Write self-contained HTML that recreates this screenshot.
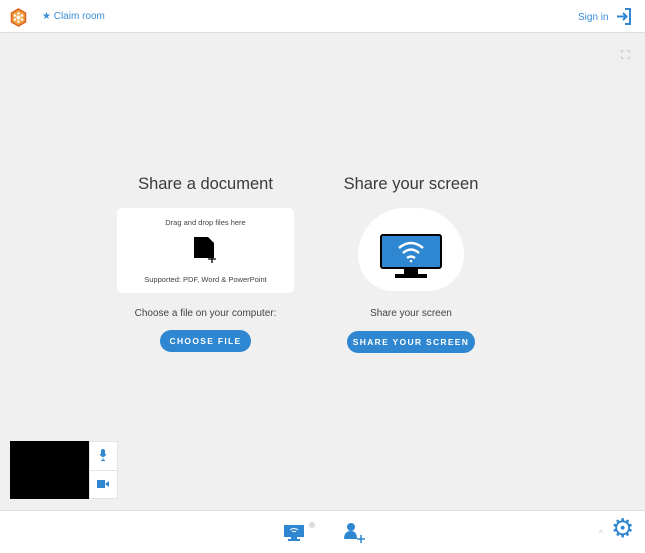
<!DOCTYPE html>
<html><head><meta charset="utf-8"><style>
*{margin:0;padding:0;box-sizing:border-box}
body{width:645px;height:553px;background:#f0f0f0;font-family:"Liberation Sans",sans-serif;position:relative;overflow:hidden}
.top{position:absolute;left:0;top:0;width:645px;height:33px;background:#fff;border-bottom:1px solid #ddd}
.bot{position:absolute;left:0;top:510px;width:645px;height:43px;background:#fff;border-top:1px solid #ddd}
.blue{color:#3a8dd6}
.abs{position:absolute}
h2{position:absolute;font-weight:normal;font-size:16.5px;color:#3a3a3a;text-align:center}
.btn{position:absolute;background:#2e87d0;color:#fff;font-size:8.5px;letter-spacing:1.3px;font-weight:bold;text-align:center;border-radius:11px;height:22px;line-height:22px}
</style></head><body>
<div class="top">
 <svg class="abs" style="left:10px;top:8px" width="17" height="19" viewBox="0 0 17 19"><path d="M8.5 1 L15.5 5 L15.5 14 L8.5 18 L1.5 14 L1.5 5Z" fill="#f0a040" stroke="#e06020" stroke-width="1.5"/><circle cx="8.5" cy="9.5" r="2" fill="#fff"/><circle cx="8.5" cy="5.5" r="1.3" fill="#fff"/><circle cx="8.5" cy="13.5" r="1.3" fill="#fff"/><circle cx="5" cy="7.5" r="1.3" fill="#fff"/><circle cx="12" cy="7.5" r="1.3" fill="#fff"/><circle cx="5" cy="11.5" r="1.3" fill="#fff"/><circle cx="12" cy="11.5" r="1.3" fill="#fff"/></svg>
 <div class="abs blue" style="left:42px;top:11px;font-size:10px">★ Claim room</div>
 <div class="abs blue" style="left:578px;top:12px;font-size:10px">Sign in</div>
 <svg class="abs" style="left:616px;top:8px" width="16" height="17" viewBox="0 0 16 17"><path d="M9 1H14V16H9" fill="none" stroke="#2e87d0" stroke-width="2"/><path d="M1 8.5H10M7 5L10.5 8.5L7 12" fill="none" stroke="#2e87d0" stroke-width="2"/></svg>
</div>
<div class="abs" style="left:621px;top:50px;width:9px;height:9px;border:1px dashed #ccc"></div>
<h2 style="left:117px;width:177px;top:175px">Share a document</h2>
<h2 style="left:330px;width:162px;top:175px">Share your screen</h2>
<div class="abs" style="left:117px;top:208px;width:177px;height:85px;background:#fff;border-radius:5px">
 <div class="abs" style="top:10px;width:100%;text-align:center;font-size:7.5px;color:#444">Drag and drop files here</div>
 <svg class="abs" style="left:77px;top:29px" width="24" height="27" viewBox="0 0 24 27"><path d="M0 0H14L20 6V21H0Z" fill="#000"/><path d="M18 18V26M14 22H22" stroke="#000" stroke-width="1.3" fill="none"/></svg>
 <div class="abs" style="top:67px;width:100%;text-align:center;font-size:7.5px;color:#444">Supported: PDF, Word &amp; PowerPoint</div>
</div>
<div class="abs" style="left:358px;top:208px;width:106px;height:83px;background:#fff;border-radius:53px 53px 40px 40px"></div>
<svg class="abs" style="left:380px;top:234px" width="62" height="45" viewBox="0 0 62 45"><rect x="1" y="1" width="60" height="33" rx="2" fill="#2e87d0" stroke="#000" stroke-width="2"/><rect x="24" y="34" width="14" height="6" fill="#000"/><rect x="15" y="40" width="32" height="4" fill="#000"/><path d="M19 14Q31 4 43 14M23 19Q31 12 39 19M27 24Q31 21 35 24" stroke="#fff" stroke-width="2.5" fill="none"/><circle cx="31" cy="27" r="1.3" fill="#fff"/></svg>
<div class="abs" style="left:117px;width:177px;top:308px;text-align:center;font-size:10px;color:#444">Choose a file on your computer:</div>
<div class="abs" style="left:330px;width:162px;top:308px;text-align:center;font-size:10px;color:#444">Share your screen</div>
<div class="btn" style="left:160px;top:330px;width:91px">CHOOSE FILE</div>
<div class="btn" style="left:347px;top:331px;width:128px">SHARE YOUR SCREEN</div>
<div class="abs" style="left:10px;top:441px;width:79px;height:58px;background:#000"></div>
<div class="abs" style="left:89px;top:441px;width:29px;height:58px;background:#fff;border:1px solid #e4e4e4"><div style="height:29px;border-bottom:1px solid #e4e4e4"></div></div>
<svg class="abs" style="left:99px;top:449px" width="8" height="12" viewBox="0 0 8 12"><rect x="2" y="0" width="4" height="7" rx="2" fill="#2e87d0"/><path d="M1 5Q4 10 7 5M4 9V11M2 11.5H6" stroke="#2e87d0" fill="none"/></svg>
<svg class="abs" style="left:97px;top:480px" width="12" height="8" viewBox="0 0 12 8"><rect width="8" height="8" fill="#2e87d0"/><path d="M8 4L12 1V7Z" fill="#2e87d0"/></svg>
<div class="bot">
 <svg class="abs" style="left:284px;top:14px" width="20" height="17" viewBox="0 0 20 17"><rect width="20" height="12" fill="#2e87d0"/><rect x="7" y="12" width="6" height="2" fill="#2e87d0"/><rect x="4" y="14" width="12" height="2" fill="#2e87d0"/><path d="M6 5Q10 2 14 5M8 7Q10 5.5 12 7" stroke="#fff" fill="none"/></svg>
 <div class="abs" style="left:309px;top:11px;width:6px;height:6px;border-radius:3px;background:#ddd"></div>
 <svg class="abs" style="left:343px;top:11px" width="23" height="22" viewBox="0 0 23 22"><circle cx="8" cy="5" r="4" fill="#2e87d0"/><path d="M1 17Q1 9 8 9Q14 9 14 17Z" fill="#2e87d0"/><path d="M18 13V21M14 17H22" stroke="#2e87d0" stroke-width="1.5"/></svg>
 <div class="abs" style="left:599px;top:18px;font-size:8px;color:#bcd">^</div>
 <div class="abs blue" style="left:611px;top:2px;font-size:26px;line-height:30px;color:#2e87d0">⚙</div>
</div>
</body></html>
